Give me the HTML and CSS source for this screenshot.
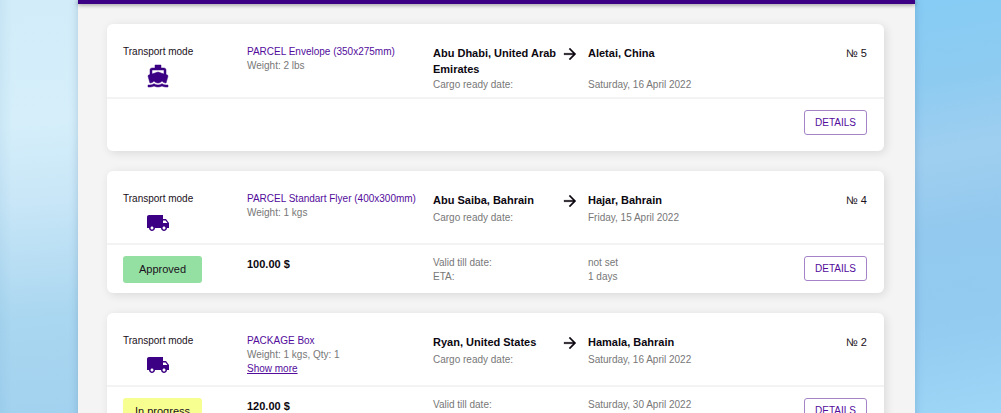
FILE: index.html
```html
<!DOCTYPE html>
<html lang="en">
<head>
<meta charset="utf-8">
<meta name="viewport" content="width=device-width, initial-scale=1">
<title>Transport requests</title>
<link rel="stylesheet" href="styles.css">
</head>
<body>
<svg class="sprite" aria-hidden="true">
  <symbol id="boat" viewBox="0 0 24 24"><path stroke="#3b0083" stroke-width=".5" d="M20 21c-1.39 0-2.78-.47-4-1.32-2.44 1.71-5.56 1.71-8 0C6.78 20.53 5.39 21 4 21H2v2h2c1.38 0 2.74-.35 4-.99 2.52 1.29 5.48 1.29 8 0 1.26.65 2.62.99 4 .99h2v-2h-2zM3.95 19H4c1.6 0 3.02-.88 4-2 .98 1.12 2.4 2 4 2s3.02-.88 4-2c.98 1.12 2.4 2 4 2h.05l1.89-6.68c.08-.26.06-.54-.06-.78s-.34-.42-.6-.5L20 10.62V6c0-1.1-.9-2-2-2h-3V1H9v3H6c-1.1 0-2 .9-2 2v4.62l-1.29.42c-.26.08-.48.26-.6.5s-.15.52-.06.78L3.95 19zM6 6h12v3.97L12 8 6 9.97V6z"/></symbol>
  <symbol id="truck" viewBox="0 0 24 24"><path d="M20 8h-3V4H3c-1.1 0-2 .9-2 2v11h2c0 1.66 1.34 3 3 3s3-1.34 3-3h6c0 1.66 1.34 3 3 3s3-1.34 3-3h2v-5l-3-4zM6 18.5c-.83 0-1.5-.67-1.5-1.5s.67-1.5 1.5-1.5 1.5.67 1.5 1.5-.67 1.5-1.5 1.5zm13.5-9l1.96 2.5H17V9.5h2.5zm-1.5 9c-.83 0-1.5-.67-1.5-1.5s.67-1.5 1.5-1.5 1.5.67 1.5 1.5-.67 1.5-1.5 1.5z"/></symbol>
  <symbol id="arrow" viewBox="0 0 24 24"><path stroke="#0c0710" stroke-width=".4" d="M12 4l-1.41 1.41L16.17 11H4v2h12.17l-5.58 5.59L12 20l8-8z"/></symbol>
</svg>
<div class="page">
  <header class="topbar"></header>
  <main class="list">
    <article class="card card--pending">
      <div class="row row--head">
        <div class="transport"><p>Transport mode</p><svg class="icon" role="img" aria-label="Sea"><use href="#boat"/></svg></div>
        <div><p class="cargo">PARCEL Envelope (350x275mm)</p><p class="muted">Weight: 2 lbs</p></div>
        <div class="route">
          <h2 class="city">Abu Dhabi, United Arab Emirates</h2>
          <svg class="arrow" aria-hidden="true"><use href="#arrow"/></svg>
          <h2 class="city">Aletai, China</h2>
          <p class="number">№ 5</p>
          <p class="muted ready">Cargo ready date:</p>
          <p class="muted">Saturday, 16 April 2022</p>
        </div>
      </div>
      <div class="row row--foot">
        <div></div><div></div>
        <div class="terms"><div></div><div></div><button class="details" type="button">DETAILS</button></div>
      </div>
    </article>

    <article class="card">
      <div class="row row--head">
        <div class="transport"><p>Transport mode</p><svg class="icon" role="img" aria-label="Road"><use href="#truck"/></svg></div>
        <div><p class="cargo">PARCEL Standart Flyer (400x300mm)</p><p class="muted">Weight: 1 kgs</p></div>
        <div class="route">
          <h2 class="city">Abu Saiba, Bahrain</h2>
          <svg class="arrow" aria-hidden="true"><use href="#arrow"/></svg>
          <h2 class="city">Hajar, Bahrain</h2>
          <p class="number">№ 4</p>
          <p class="muted ready">Cargo ready date:</p>
          <p class="muted">Friday, 15 April 2022</p>
        </div>
      </div>
      <div class="row row--foot">
        <div><p class="status status--approved">Approved</p></div>
        <p class="price">100.00 $</p>
        <div class="terms">
          <div class="muted"><p>Valid till date:</p><p>ETA:</p></div>
          <div class="muted"><p>not set</p><p>1 days</p></div>
          <button class="details" type="button">DETAILS</button>
        </div>
      </div>
    </article>

    <article class="card">
      <div class="row row--head">
        <div class="transport"><p>Transport mode</p><svg class="icon" role="img" aria-label="Road"><use href="#truck"/></svg></div>
        <div><p class="cargo">PACKAGE Box</p><p class="muted">Weight: 1 kgs, Qty: 1</p><p><a class="more" href="#">Show more</a></p></div>
        <div class="route">
          <h2 class="city">Ryan, United States</h2>
          <svg class="arrow" aria-hidden="true"><use href="#arrow"/></svg>
          <h2 class="city">Hamala, Bahrain</h2>
          <p class="number">№ 2</p>
          <p class="muted ready">Cargo ready date:</p>
          <p class="muted">Saturday, 16 April 2022</p>
        </div>
      </div>
      <div class="row row--foot">
        <div><p class="status status--progress">In progress</p></div>
        <p class="price">120.00 $</p>
        <div class="terms">
          <div class="muted"><p>Valid till date:</p></div>
          <div class="muted"><p>Saturday, 30 April 2022</p></div>
          <button class="details" type="button">DETAILS</button>
        </div>
      </div>
    </article>
  </main>
</div>
</body>
</html>
```

FILE: styles.css
```css
* { box-sizing: border-box; }

html { height: 100%; }

body {
  height: 100%;
  margin: 0;
  padding: 0 86px 0 78px;
  overflow: hidden;
  font: 10px/14px "Liberation Sans", Arial, sans-serif;
  color: #1a1020;
  background:
    linear-gradient(90deg, rgba(70, 140, 190, .08), transparent 12px) left / 78px 100% no-repeat,
    linear-gradient(175deg, #d2ecf9 0%, #d5eefa 30%, #c8e6f7 49%, #a9d6f0 77%, #a2d2ef 100%) left / 78px 100% no-repeat,
    linear-gradient(170deg, #86ccf4 0%, #8ecbf1 20%, #9fcff0 37%, #93c9ee 55%, #92caf0 75%, #9dd6f6 100%) right / 86px 100% no-repeat,
    #a9d6f0;
}

h2, p { margin: 0; }

.sprite { display: none; }

.page {
  min-height: 100%;
  background: #f4f4f4;
  box-shadow: 0 0 8px rgba(50, 90, 140, .25);
}

.topbar {
  height: 4px;
  background: #3b0083;
  box-shadow: 0 1px 4px rgba(0, 0, 0, .4);
}

.list {
  display: flex;
  flex-direction: column;
  gap: 20px;
  padding: 20px 31px 20px 29px;
}

.card {
  border-radius: 6px;
  background: #fff;
  box-shadow: 2px 2px 10px rgba(0, 0, 0, .11);
}

.row {
  display: grid;
  grid-template-columns: 2fr 3fr 7fr;
  align-items: start;
  padding: 0 17px 0 16px;
}

.row--head {
  min-height: 74px;
  padding-top: 21px;
  padding-bottom: 5px;
  border-bottom: 2px solid #f3f3f3;
}

.row--foot {
  padding-top: 11px;
  padding-bottom: 9px;
}

.card--pending .row--foot { padding-bottom: 16px; }

.transport {
  display: flex;
  flex-direction: column;
  align-items: center;
  gap: 5px;
  width: fit-content;
}

.icon {
  width: 24px;
  height: 24px;
  fill: #3b0083;
}

.cargo, .more { color: #530c9b; }

.muted { color: #777; }

.route, .terms { display: grid; }

.route {
  grid-template-columns: minmax(0, 128fr) 27fr 209fr 70fr;
  row-gap: 1px;
}

.terms { grid-template-columns: 155fr 209fr 70fr; }

.city, .price {
  font-size: 11px;
  line-height: 16px;
  font-weight: 700;
  color: #0c0710;
}

.arrow {
  width: 18px;
  height: 18px;
  fill: #0c0710;
}

.ready { grid-column: 1 / 3; }

.number {
  font-size: 11px;
  line-height: 16px;
  text-align: right;
}

.status {
  width: 79px;
  border-radius: 3px;
  font-size: 11px;
  line-height: 27px;
  text-align: center;
}

.status--approved { background: #94e0a2; }

.status--progress { background: #f8ff91; }

.details {
  justify-self: end;
  height: 25px;
  padding: 0 10px;
  border: 1px solid #a583c8;
  border-radius: 3px;
  background: #fff;
  font: inherit;
  color: #530c9b;
  cursor: pointer;
}
```
